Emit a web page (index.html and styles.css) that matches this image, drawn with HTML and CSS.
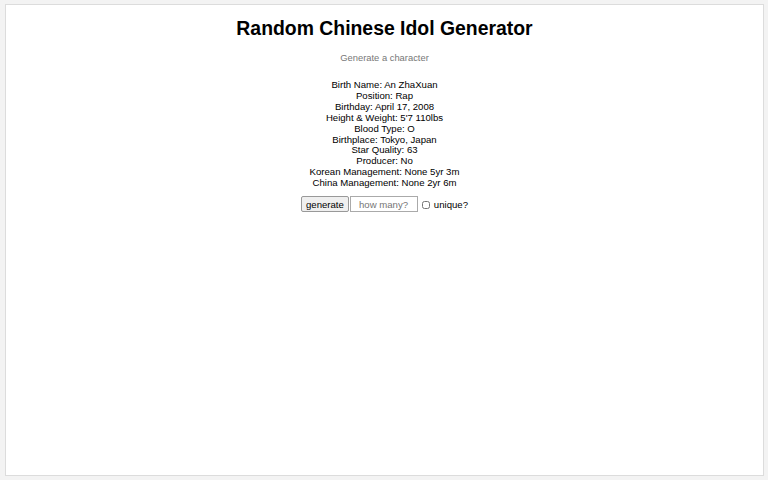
FILE: index.html
```html
<!DOCTYPE html>
<html lang="en">
<head>
    <meta charset="UTF-8">
    <meta name="viewport" content="width=device-width, initial-scale=1.0">
    <title>Random Chinese Idol Generator</title>
    <link rel="stylesheet" href="styles.css">
</head>
<body>
    <div class="container">
        <h1>Random Chinese Idol Generator</h1>
        <p class="sous-titre">Generate a character</p>

        <div id="fiche" class="fiche">
            <div>Birth Name: An ZhaXuan</div>
            <div>Position: Rap</div>
            <div>Birthday: April 17, 2008</div>
            <div>Height &amp; Weight: 5'7 110lbs</div>
            <div>Blood Type: O</div>
            <div>Birthplace: Tokyo, Japan</div>
            <div>Star Quality: 63</div>
            <div>Producer: No</div>
            <div>Korean Management: None 5yr 3m</div>
            <div>China Management: None 2yr 6m</div>
        </div>

        <div class="controle">
            <button>generate</button>
            <input type="text" placeholder="how many?">
            <label><input type="checkbox"> unique?</label>
        </div>
    </div>
</body>
</html>
```

FILE: styles.css
```css
body {
    font-family: 'Liberation Sans', Arial, sans-serif;
    background-color: #f3f3f3;
    margin: 0;
    padding: 4px 4px 4px 5px;
    color: #000;
}

.container {
    height: 472px;
    box-sizing: border-box;
    background: white;
    border: 1px solid #dcdcdc;
    text-align: center;
    padding-top: 15px;
}

h1 {
    font-size: 19.4px;
    margin: 0;
    line-height: 17px;
}

.sous-titre {
    font-size: 9.4px;
    color: #777;
    margin: 15px 0 17px;
}

.fiche {
    font-size: 9.6px;
    line-height: 10.9px;
}

.controle {
    margin-top: 7px;
    font-size: 9.6px;
}

button {
    font-family: inherit;
    font-size: 9.6px;
    padding: 2px 4px 1px;
    background: #efefef;
    border: 1px solid #999;
    border-radius: 2px;
}

input[type="text"] {
    font-family: inherit;
    font-size: 9.6px;
    width: 58px;
    margin-left: -2px;
    padding: 2px 4px 1px;
    border: 1px solid #aaa;
    text-align: center;
}

input[type="checkbox"] {
    width: 8px;
    height: 8px;
    margin: 0 1px 0 2px;
    vertical-align: -1px;
}
```
